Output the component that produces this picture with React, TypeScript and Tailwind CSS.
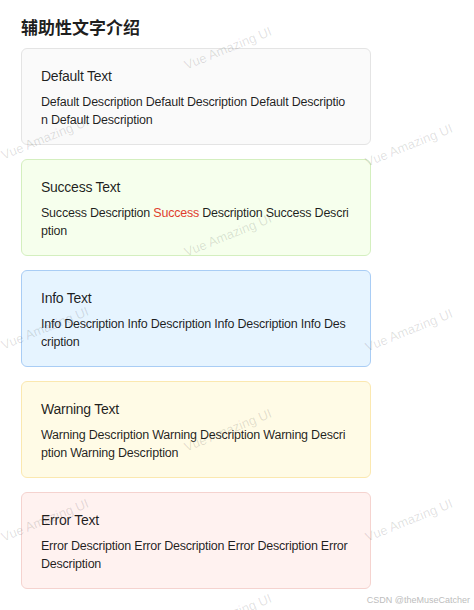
import React from "react";

const cards = [
  {
    title: "Default Text",
    bg: "bg-[#fafafa]",
    border: "border-[#e4e4e4]",
    desc: <>Default Description Default Description Default Description Default Description</>,
  },
  {
    title: "Success Text",
    bg: "bg-[#f6ffed]",
    border: "border-[#d4efbf]",
    desc: (
      <>
        Success Description <span className="text-[#e03e2d]">Success</span> Description Success Description
      </>
    ),
  },
  {
    title: "Info Text",
    bg: "bg-[#e6f4ff]",
    border: "border-[#a9cdf5]",
    desc: <>Info Description Info Description Info Description Info Description</>,
  },
  {
    title: "Warning Text",
    bg: "bg-[#fffbe6]",
    border: "border-[#fbe8b0]",
    desc: <>Warning Description Warning Description Warning Description Warning Description</>,
  },
  {
    title: "Error Text",
    bg: "bg-[#fff2f0]",
    border: "border-[#f5d3cf]",
    desc: <>Error Description Error Description Error Description Error Description</>,
  },
];

const marks = [
  { x: 185, y: 38 },
  { x: 2, y: 128 },
  { x: 366, y: 135 },
  { x: 185, y: 225 },
  { x: 2, y: 318 },
  { x: 366, y: 320 },
  { x: 185, y: 420 },
  { x: 2, y: 510 },
  { x: 366, y: 510 },
  { x: 185, y: 605 },
];

export default function App() {
  return (
    <div
      className="relative w-[474px] h-[610px] overflow-hidden bg-white text-[rgba(0,0,0,0.88)]"
      style={{ fontFamily: '"Liberation Sans", Arial, "Noto Sans CJK SC", sans-serif' }}
    >
      <div className="pl-[21px] pt-[14px]">
        <h1 className="text-[17px] leading-[26px] font-bold h-[34px]" style={{ fontFamily: '"Noto Sans CJK SC", sans-serif' }}>
          辅助性文字介绍
        </h1>
        <div className="flex flex-col gap-[14px]">
          {cards.map((c) => (
            <div
              key={c.title}
              className={`w-[350px] h-[97px] rounded-[6px] border ${c.bg} ${c.border} pl-[19px] pr-[20px] pt-[16px]`}
            >
              <div className="text-[14px] leading-[22px] tracking-[-0.25px]">{c.title}</div>
              <div className="mt-[6px] text-[12.5px] leading-[18px] tracking-[-0.22px] break-all">{c.desc}</div>
            </div>
          ))}
        </div>
      </div>
      {marks.map((m, i) => (
        <span
          key={i}
          className="pointer-events-none absolute whitespace-nowrap text-[13px] text-[rgba(0,0,0,0.13)] -rotate-[22deg] origin-left"
          style={{ left: m.x, top: m.y + 18 }}
        >
          Vue Amazing UI
        </span>
      ))}
      <span className="absolute right-[4px] bottom-[3px] text-[9px] text-[#bdbdbd]">CSDN @theMuseCatcher</span>
    </div>
  );
}
